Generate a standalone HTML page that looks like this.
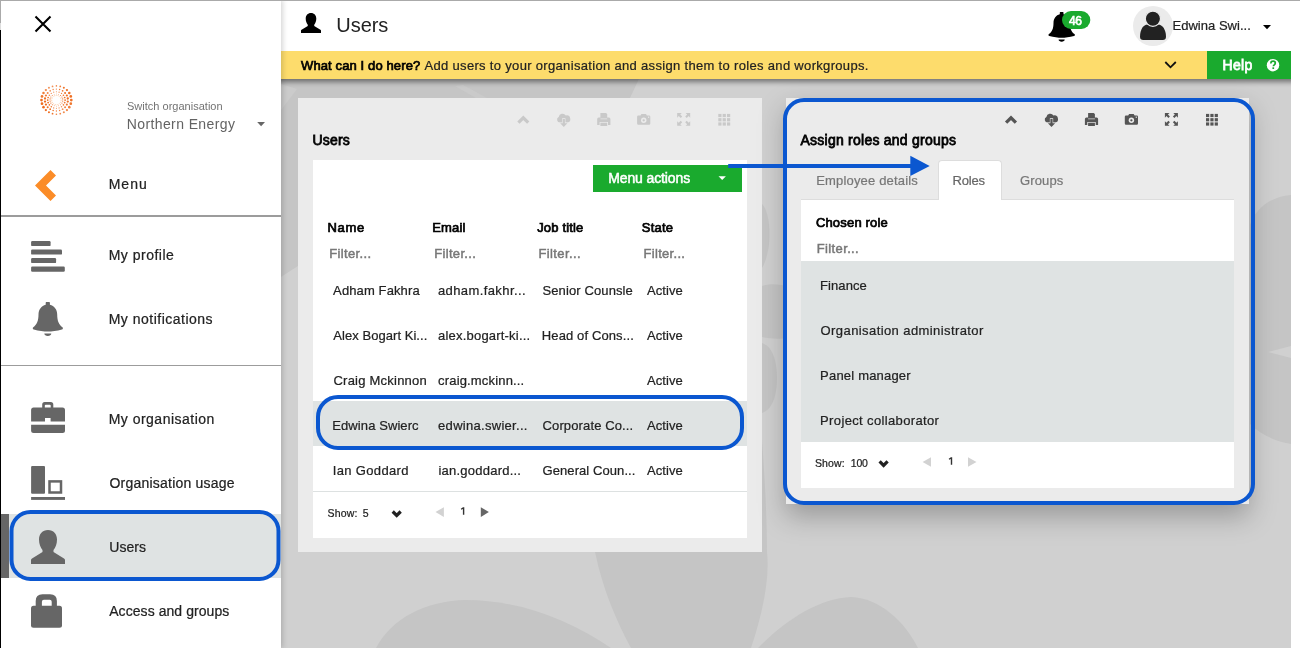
<!DOCTYPE html>
<html><head><meta charset="utf-8"><title>Users</title><style>
*{box-sizing:border-box;margin:0;padding:0}
html,body{width:1300px;height:648px;overflow:hidden;background:#fff;font-family:"Liberation Sans",sans-serif}
#page{position:absolute;left:0;top:0;width:1300px;height:648px;overflow:hidden;background:#fff}
.a{position:absolute}
.t{position:absolute;white-space:nowrap}
svg{position:absolute;left:0;top:0;overflow:visible}
</style></head><body><div id="page">
<div class="a" style="left:281px;top:51px;width:1010px;height:597px;background:#d0d0d0;overflow:hidden"><svg width="1010" height="597" viewBox="281 51 1010 597">
<g fill="#c5c5c5">
<path d="M281 51H652L630 98H298V266Q290 271 281 277Z"/>
<path d="M595 552C603 590 616 620 631 648H751C762 615 770 580 767 552C767 520 765 480 762 440V552Z"/>
<path d="M376 648C392 618 425 601 466 600C520 600 570 620 611 648Z"/>
<path d="M758 648C785 620 820 598 851 597C880 598 905 622 918 648Z"/>
<path d="M762 343C772 346 777 360 777 378C777 396 772 410 762 413Z"/>
<path d="M762 204C771 212 773 250 762 268Z"/>
<path d="M762 286C770 283 780 284 790 287V338C780 339 770 339 762 337Z"/>
<path d="M1291 195C1270 197 1256 208 1250 225L1250 424C1262 436 1278 442 1291 444Z"/>
</g>
<path d="M1291 346L1268 352L1291 358Z" fill="#d0d0d0"/>
<path d="M281 84L297 89L281 110Z" fill="#cbcbcb"/>
<path d="M455 86L463 85L487 98H476Z" fill="#cacaca"/>
</svg></div>
<div class="a" style="left:298px;top:98px;width:464px;height:454px;background:#ebebeb"></div>
<div class="a" style="left:313px;top:160px;width:434px;height:377.500px;background:#fff"></div>
<div class="a" style="left:313px;top:401px;width:434px;height:45px;background:#dfe3e3"></div>
<div class="a" style="left:313px;top:491px;width:434px;height:1px;background:#dde1e1"></div>
<div class="a" style="left:593px;top:165px;width:149px;height:27px;background:#1aaa2e"></div>
<div class="a" style="left:786px;top:98px;width:463px;height:406px;background:#ebebeb;box-shadow:0 12px 26px rgba(0,0,0,.27)"></div>
<div class="a" style="left:801px;top:199px;width:433px;height:289px;background:#fff;border-top:1px solid #ddd"></div>
<div class="a" style="left:937.500px;top:160px;width:64px;height:40px;background:#fff;border:1px solid #ddd;border-bottom:none;border-radius:4px 4px 0 0"></div>
<div class="a" style="left:801px;top:261px;width:433px;height:180.500px;background:#dfe3e3"></div>
<div class="a" style="left:281px;top:51px;width:1010px;height:597px;overflow:hidden"><div class="a" style="left:-10px;top:0;width:1030px;height:28px;box-shadow:0 3px 5px rgba(0,0,0,.45)"></div></div>
<div class="a" style="left:281px;top:51px;width:926px;height:28px;background:#fddc6c"></div>
<div class="a" style="left:1207px;top:51px;width:84px;height:28px;background:#1aaa2e"></div>
<div class="a" style="left:281px;top:0;width:1019px;height:51px;background:#fff"></div>
<div class="a" style="left:0;top:0;width:281px;height:648px;background:#fff;box-shadow:2px 0 5px rgba(0,0,0,.16)"></div>
<div class="a" style="left:0;top:79px;width:281px;height:569px;background:#fff"></div>
<div class="a" style="left:9px;top:514px;width:272px;height:64px;background:#dfe3e3"></div>
<div class="a" style="left:1px;top:514px;width:8px;height:64px;background:#666"></div>
<div class="a" style="left:1px;top:215px;width:280px;height:2px;background:#9c9c9c"></div>
<div class="a" style="left:1px;top:365px;width:280px;height:1px;background:#9c9c9c"></div>
<div class="a" style="left:0;top:0;width:1300px;height:1px;background:#aaa"></div>
<div class="a" style="left:0;top:0;width:1px;height:23px;background:#aaa"></div><div class="a" style="left:0;top:23px;width:1px;height:7px;background:#ddd"></div>
<div class="a" style="left:0;top:30px;width:1px;height:618px;background:#000"></div>
<div class="a" style="left:1133px;top:6px;width:40px;height:40px;border-radius:20px;background:#ebebeb"></div>
<svg width="1300" height="648" viewBox="0 0 1300 648"><path d="M35.500 16.500L50.500 31.500M50.500 16.500L35.500 31.500" stroke="#000" stroke-width="2.100" fill="none"/><g fill="#ee6a1c"><circle cx="71.30" cy="100.05" r="1.37" opacity="0.95"/><circle cx="70.79" cy="103.71" r="1.34" opacity="0.92"/><circle cx="69.30" cy="107.13" r="1.27" opacity="0.87"/><circle cx="66.94" cy="110.06" r="1.15" opacity="0.81"/><circle cx="63.85" cy="112.31" r="1.02" opacity="0.76"/><circle cx="60.26" cy="113.72" r="0.88" opacity="0.80"/><circle cx="56.40" cy="114.20" r="0.78" opacity="0.87"/><circle cx="52.54" cy="113.72" r="0.88" opacity="0.94"/><circle cx="48.95" cy="112.31" r="1.02" opacity="0.98"/><circle cx="45.86" cy="110.06" r="1.15" opacity="1.00"/><circle cx="43.50" cy="107.13" r="1.27" opacity="1.00"/><circle cx="42.01" cy="103.71" r="1.34" opacity="1.00"/><circle cx="41.50" cy="100.05" r="1.37" opacity="0.98"/><circle cx="42.01" cy="96.39" r="1.34" opacity="0.93"/><circle cx="43.50" cy="92.97" r="1.27" opacity="0.87"/><circle cx="45.86" cy="90.04" r="1.15" opacity="0.79"/><circle cx="48.95" cy="87.79" r="1.02" opacity="0.72"/><circle cx="52.54" cy="86.38" r="0.88" opacity="0.75"/><circle cx="56.40" cy="85.89" r="0.78" opacity="0.82"/><circle cx="60.26" cy="86.38" r="0.88" opacity="0.87"/><circle cx="63.85" cy="87.79" r="1.02" opacity="0.92"/><circle cx="66.94" cy="90.04" r="1.15" opacity="0.95"/><circle cx="69.30" cy="92.97" r="1.27" opacity="0.97"/><circle cx="70.79" cy="96.39" r="1.34" opacity="0.97"/><circle cx="67.78" cy="101.60" r="1.15" opacity="0.93"/><circle cx="66.86" cy="104.59" r="1.10" opacity="0.89"/><circle cx="65.09" cy="107.20" r="1.00" opacity="0.83"/><circle cx="62.62" cy="109.24" r="0.88" opacity="0.76"/><circle cx="59.64" cy="110.53" r="0.76" opacity="0.80"/><circle cx="56.40" cy="110.97" r="0.66" opacity="0.87"/><circle cx="53.16" cy="110.53" r="0.76" opacity="0.94"/><circle cx="50.18" cy="109.24" r="0.88" opacity="0.99"/><circle cx="47.71" cy="107.20" r="1.00" opacity="1.00"/><circle cx="45.94" cy="104.59" r="1.10" opacity="1.00"/><circle cx="45.02" cy="101.60" r="1.15" opacity="1.00"/><circle cx="45.02" cy="98.50" r="1.15" opacity="0.95"/><circle cx="45.94" cy="95.51" r="1.10" opacity="0.89"/><circle cx="47.71" cy="92.90" r="1.00" opacity="0.81"/><circle cx="50.18" cy="90.86" r="0.88" opacity="0.73"/><circle cx="53.16" cy="89.57" r="0.76" opacity="0.75"/><circle cx="56.40" cy="89.12" r="0.66" opacity="0.82"/><circle cx="59.64" cy="89.57" r="0.76" opacity="0.88"/><circle cx="62.62" cy="90.86" r="0.88" opacity="0.93"/><circle cx="65.09" cy="92.90" r="1.00" opacity="0.96"/><circle cx="66.86" cy="95.51" r="1.10" opacity="0.97"/><circle cx="67.78" cy="98.50" r="1.15" opacity="0.96"/><circle cx="65.10" cy="100.05" r="0.89" opacity="0.95"/><circle cx="64.67" cy="102.60" r="0.87" opacity="0.91"/><circle cx="63.44" cy="104.91" r="0.80" opacity="0.85"/><circle cx="61.51" cy="106.74" r="0.70" opacity="0.78"/><circle cx="59.09" cy="107.91" r="0.59" opacity="0.79"/><circle cx="56.40" cy="108.31" r="0.51" opacity="0.87"/><circle cx="53.71" cy="107.91" r="0.59" opacity="0.95"/><circle cx="51.29" cy="106.74" r="0.70" opacity="1.00"/><circle cx="49.36" cy="104.91" r="0.80" opacity="1.00"/><circle cx="48.13" cy="102.60" r="0.87" opacity="1.00"/><circle cx="47.70" cy="100.05" r="0.89" opacity="0.98"/><circle cx="48.13" cy="97.50" r="0.87" opacity="0.92"/><circle cx="49.36" cy="95.19" r="0.80" opacity="0.84"/><circle cx="51.29" cy="93.36" r="0.70" opacity="0.75"/><circle cx="53.71" cy="92.19" r="0.59" opacity="0.74"/><circle cx="56.40" cy="91.78" r="0.51" opacity="0.82"/><circle cx="59.09" cy="92.19" r="0.59" opacity="0.88"/><circle cx="61.51" cy="93.36" r="0.70" opacity="0.93"/><circle cx="63.44" cy="95.19" r="0.80" opacity="0.96"/><circle cx="64.67" cy="97.50" r="0.87" opacity="0.97"/><circle cx="62.70" cy="101.11" r="0.62" opacity="0.93"/><circle cx="61.94" cy="103.09" r="0.58" opacity="0.87"/><circle cx="60.51" cy="104.71" r="0.51" opacity="0.79"/><circle cx="58.59" cy="105.76" r="0.43" opacity="0.78"/><circle cx="56.40" cy="106.13" r="0.36" opacity="0.87"/><circle cx="54.21" cy="105.76" r="0.43" opacity="0.95"/><circle cx="52.29" cy="104.71" r="0.51" opacity="1.00"/><circle cx="50.86" cy="103.09" r="0.58" opacity="1.00"/><circle cx="50.10" cy="101.11" r="0.62" opacity="1.00"/><circle cx="50.10" cy="98.99" r="0.62" opacity="0.95"/><circle cx="50.86" cy="97.01" r="0.58" opacity="0.87"/><circle cx="52.29" cy="95.39" r="0.51" opacity="0.77"/><circle cx="54.21" cy="94.34" r="0.43" opacity="0.73"/><circle cx="56.40" cy="93.97" r="0.36" opacity="0.82"/><circle cx="58.59" cy="94.34" r="0.43" opacity="0.89"/><circle cx="60.51" cy="95.39" r="0.51" opacity="0.94"/><circle cx="61.94" cy="97.01" r="0.58" opacity="0.97"/><circle cx="62.70" cy="98.99" r="0.62" opacity="0.96"/><circle cx="56.4" cy="100.05" r="4.700" fill="none" stroke="#f47b20" stroke-width=".6" opacity=".55" stroke-dasharray="1.2 .7"/></g><path d="M257.200 122.100H265L261.100 126.300Z" fill="#666"/><path d="M35 185.500L50.500 170L56 175.500L46 185.500L56 195.500L50.500 201Z" fill="#fb8c28"/><rect x="31.100" y="241" width="19.5" height="5.100" rx="1.200" fill="#666"/><rect x="31.100" y="249.5" width="30.9" height="5.100" rx="1.200" fill="#666"/><rect x="31.100" y="258" width="25.0" height="5.100" rx="1.200" fill="#666"/><rect x="31.100" y="266.6" width="33.7" height="5.100" rx="1.200" fill="#666"/><path transform="translate(32.800 302)" d="M12.900 .7c0-.5 .2-.7 .7-.7h2.800c.5 0 .7 .2 .7 .7v2c4.300 1 7.3 4.8 7.3 9.8c0 6.5 1.7 10 5.2 12.7c.9 .7 .6 2-.5 2.3C24 29 19 29.5 15 29.5S6 29 1 27.5c-1.1-.3-1.4-1.6-.5-2.3C4 22.5 5.700 19 5.700 12.5c0-5 3-8.800 7.200-9.800z M11.500 31.500h7c0 1.500-1.500 2.500-3.500 2.500s-3.500-1-3.500-2.500z" fill="#666"/><g fill="#666"><path d="M42.200 408V404.500q0-2.500 2.500-2.500h6.100q2.500 0 2.500 2.500V408h-2.600v-2.400q0-.9-.9-.9h-4.100q-.9 0-.9 .9V408z"/><path d="M31.100 410.100q0-2.500 2.500-2.500h28.900q2.500 0 2.500 2.500v11.400H50.600v-3.400H45v3.400H31.100z"/><path d="M31.100 424.800H65v5.700q0 2.500-2.500 2.500H33.600q-2.500 0-2.500-2.500z"/></g><g fill="#666"><rect x="31.100" y="466" width="13.900" height="27.700" rx="1"/><rect x="31.100" y="497" width="33.900" height="2.900"/></g><rect x="49.500" y="481.400" width="11.500" height="11.100" fill="none" stroke="#666" stroke-width="2.500"/><path transform="translate(31 530)" d="M17 0C22.5 0 26 4 26 9.5C26 14 24.5 17.5 22.5 20L22.5 22L33 28.5Q34 29 34 30L34 34L0 34L0 30Q0 29 1 28.5L11.5 22L11.5 20C9.5 17.5 8 14 8 9.5C8 4 11.5 0 17 0Z" fill="#666"/><g fill="#666"><rect x="31" y="605.800" width="31" height="22" rx="2.500"/><path d="M35.700 607V601q0-6.800 6.800-6.800h7.600q6.800 0 6.800 6.800v6h-5.200v-5.200q0-2-2-2h-5.800q-2 0-2 2V607z"/></g><path transform="translate(301 13) scale(0.5882)" d="M17 0C22.5 0 26 4 26 9.5C26 14 24.5 17.5 22.5 20L22.5 22L33 28.5Q34 29 34 30L34 34L0 34L0 30Q0 29 1 28.5L11.5 22L11.5 20C9.5 17.5 8 14 8 9.5C8 4 11.5 0 17 0Z" fill="#000"/><path transform="translate(1048.500 12) scale(0.8767 0.8765)" d="M12.900 .7c0-.5 .2-.7 .7-.7h2.800c.5 0 .7 .2 .7 .7v2c4.300 1 7.3 4.8 7.3 9.8c0 6.5 1.7 10 5.2 12.7c.9 .7 .6 2-.5 2.3C24 29 19 29.5 15 29.5S6 29 1 27.5c-1.1-.3-1.4-1.6-.5-2.3C4 22.5 5.700 19 5.700 12.5c0-5 3-8.800 7.200-9.800z M11.500 31.500h7c0 1.500-1.500 2.500-3.500 2.500s-3.500-1-3.500-2.500z" fill="#000"/><rect x="1062" y="11" width="28.300" height="18" rx="9" fill="#1aaa2e"/><path d="M1140 36.800C1140 29.500 1143.500 24.600 1147.500 24.600H1158.200C1162.200 24.600 1166 29.500 1166 36.800C1166 39 1164.800 40 1162.800 40H1143.200C1141.200 40 1140 39 1140 36.800Z" fill="#222"/><circle cx="1152.900" cy="18.700" r="7.600" fill="#222" stroke="#ebebeb" stroke-width="1.200"/><path d="M1263 25H1271L1267 29.200Z" fill="#000"/><polyline points="1165.300,62 1170.500,67.300 1175.800,62" fill="none" stroke="#111" stroke-width="1.800"/><circle cx="1273" cy="65.200" r="6.200" fill="#fff"/><path d="M1270.800 63.400q0-2.300 2.300-2.300q2.200 0 2.200 2q0 1.200-1.100 1.800q-.8 .5-.8 1.300" fill="none" stroke="#1aaa2e" stroke-width="1.700"/><rect x="1272.400" y="67.300" width="1.700" height="1.700" fill="#1aaa2e"/><polyline points="518.4,122.7 523.3,117.8 528.1999999999999,122.7" fill="none" stroke="#c9c9c9" stroke-width="3.2"/><path d="M560.0 122.6A2.95 2.95 0 0 1 558.6999999999999 117A3.9 3.9 0 0 1 565.8 115.5A3.2 3.2 0 0 1 567.5 122.6Z" fill="#c9c9c9"/><path d="M562.6999999999999 118.9h2.2v4.4h2.5l-3.6 3.6l-3.6-3.6h2.500z" fill="#c9c9c9" stroke="#ebebeb" stroke-width="1.1" paint-order="stroke"/><g fill="#c9c9c9"><path d="M600.4 112.9h5.6l1.2 1.2v4.3h-6.800z"/><path d="M597.1999999999999 118.9q0-1.500 1.500-1.500h10.200q1.500 0 1.500 1.500v6h-2.400v-3h-8.400v3h-2.400z"/></g><rect x="600.4" y="118.4" width="6.8" height=".9" fill="#ebebeb" opacity=".75"/><rect x="600.4" y="122.7" width="6.8" height="3.3" fill="#c9c9c9"/><g fill="#c9c9c9"><path d="M638.3 115.600h2.200l.9-1.700h4.600l.9 1.700h2.200q1.200 0 1.200 1.200v6.800q0 1.200-1.200 1.200h-10.800q-1.200 0-1.200-1.200v-6.800q0-1.200 1.200-1.200z"/></g><circle cx="643.6999999999999" cy="120.3" r="2.7" fill="#ebebeb"/><circle cx="643.6999999999999" cy="120.3" r="1.15" fill="#c9c9c9"/><rect x="647.9999999999999" y="116.6" width="1.2" height="1.2" fill="#ebebeb"/><g fill="#c9c9c9"><path d="M677.1999999999999 113.05L681.8 113.05L680.2499999999999 114.6L682.1999999999999 116.55L680.6999999999999 118.05L678.7499999999999 116.1L677.1999999999999 117.64999999999999Z"/><path d="M690.1999999999999 113.05L685.5999999999999 113.05L687.15 114.6L685.1999999999999 116.55L686.6999999999999 118.05L688.65 116.1L690.1999999999999 117.64999999999999Z"/><path d="M677.1999999999999 125.85000000000001L681.8 125.85000000000001L680.2499999999999 124.30000000000001L682.1999999999999 122.35000000000001L680.6999999999999 120.85000000000001L678.7499999999999 122.80000000000001L677.1999999999999 121.25000000000001Z"/><path d="M690.1999999999999 125.85000000000001L685.5999999999999 125.85000000000001L687.15 124.30000000000001L685.1999999999999 122.35000000000001L686.6999999999999 120.85000000000001L688.65 122.80000000000001L690.1999999999999 121.25000000000001Z"/></g><g fill="#c9c9c9"><rect x="718.30" y="113.90" width="3.2" height="3.2"/><rect x="718.30" y="118.15" width="3.2" height="3.2"/><rect x="718.30" y="122.40" width="3.2" height="3.2"/><rect x="722.65" y="113.90" width="3.2" height="3.2"/><rect x="722.65" y="118.15" width="3.2" height="3.2"/><rect x="722.65" y="122.40" width="3.2" height="3.2"/><rect x="727.00" y="113.90" width="3.2" height="3.2"/><rect x="727.00" y="118.15" width="3.2" height="3.2"/><rect x="727.00" y="122.40" width="3.2" height="3.2"/></g><polyline points="1006.1,122.7 1011,117.8 1015.9,122.7" fill="none" stroke="#555" stroke-width="3.2"/><path d="M1047.7 122.6A2.95 2.95 0 0 1 1046.4 117A3.9 3.9 0 0 1 1053.5 115.5A3.2 3.2 0 0 1 1055.2 122.6Z" fill="#555"/><path d="M1050.4 118.9h2.2v4.4h2.5l-3.6 3.6l-3.6-3.6h2.500z" fill="#555" stroke="#ebebeb" stroke-width="1.1" paint-order="stroke"/><g fill="#555"><path d="M1088.1 112.9h5.6l1.2 1.2v4.3h-6.800z"/><path d="M1084.9 118.9q0-1.500 1.500-1.500h10.200q1.500 0 1.500 1.500v6h-2.400v-3h-8.400v3h-2.400z"/></g><rect x="1088.1" y="118.4" width="6.8" height=".9" fill="#ebebeb" opacity=".75"/><rect x="1088.1" y="122.7" width="6.8" height="3.3" fill="#555"/><g fill="#555"><path d="M1126.0 115.600h2.200l.9-1.700h4.600l.9 1.700h2.200q1.200 0 1.200 1.200v6.800q0 1.200-1.200 1.200h-10.800q-1.200 0-1.200-1.200v-6.800q0-1.200 1.200-1.200z"/></g><circle cx="1131.4" cy="120.3" r="2.7" fill="#ebebeb"/><circle cx="1131.4" cy="120.3" r="1.15" fill="#555"/><rect x="1135.7" y="116.6" width="1.2" height="1.2" fill="#ebebeb"/><g fill="#555"><path d="M1164.9 113.05L1169.5 113.05L1167.95 114.6L1169.9 116.55L1168.4 118.05L1166.45 116.1L1164.9 117.64999999999999Z"/><path d="M1177.9 113.05L1173.3000000000002 113.05L1174.8500000000001 114.6L1172.9 116.55L1174.4 118.05L1176.3500000000001 116.1L1177.9 117.64999999999999Z"/><path d="M1164.9 125.85000000000001L1169.5 125.85000000000001L1167.95 124.30000000000001L1169.9 122.35000000000001L1168.4 120.85000000000001L1166.45 122.80000000000001L1164.9 121.25000000000001Z"/><path d="M1177.9 125.85000000000001L1173.3000000000002 125.85000000000001L1174.8500000000001 124.30000000000001L1172.9 122.35000000000001L1174.4 120.85000000000001L1176.3500000000001 122.80000000000001L1177.9 121.25000000000001Z"/></g><g fill="#555"><rect x="1206.00" y="113.90" width="3.2" height="3.2"/><rect x="1206.00" y="118.15" width="3.2" height="3.2"/><rect x="1206.00" y="122.40" width="3.2" height="3.2"/><rect x="1210.35" y="113.90" width="3.2" height="3.2"/><rect x="1210.35" y="118.15" width="3.2" height="3.2"/><rect x="1210.35" y="122.40" width="3.2" height="3.2"/><rect x="1214.70" y="113.90" width="3.2" height="3.2"/><rect x="1214.70" y="118.15" width="3.2" height="3.2"/><rect x="1214.70" y="122.40" width="3.2" height="3.2"/></g><path d="M718.500 176.200H725.900L722.200 180.100Z" fill="#fff"/><polyline points="392.700,511.500 396.700,515.500 400.700,511.500" fill="none" stroke="#222" stroke-width="3.200"/><path d="M435.500 512L443.900 507.200V516.900Z" fill="#d2d2d2"/><path d="M463 507.300h1.300v7.400h-1.400v-5.800l-1.600 .9l-.5-1z" fill="#333"/><path d="M488.900 512L480.800 507.200V516.900Z" fill="#666"/><polyline points="879.600,461.400 883.600,465.400 887.600,461.400" fill="none" stroke="#222" stroke-width="3.200"/><path d="M922.600 462L931 457.300V466.800Z" fill="#d2d2d2"/><path d="M976.500 462L968 457.300V466.800Z" fill="#d2d2d2"/><path d="M950.900 457.300h1.300v7.500h-1.400v-5.900l-1.600 .9l-.5-1z" fill="#333"/><g fill="none" stroke="#0b57d0" stroke-width="4"><rect x="785" y="100" width="468" height="403" rx="19"/><rect x="318" y="397" width="424" height="51" rx="20"/><rect x="11.500" y="512" width="267" height="67" rx="19"/><path d="M728.200 166H912"/></g><path d="M910.300 155.800L929.700 166L910.300 176Z" fill="#0b57d0"/></svg>
<div class="a" style="left:0;top:0;width:1300px;height:648px;will-change:transform"><div class="t" style="left:336.30px;top:15.07px;font-size:20px;line-height:20px;color:#222;letter-spacing:-0.057px;">Users</div>
<div class="t" style="left:1069.10px;top:14.54px;font-size:12px;line-height:12px;color:#fff;-webkit-text-stroke:0.66px #fff;letter-spacing:-0.474px;">46</div>
<div class="t" style="left:1172.50px;top:18.60px;font-size:13px;line-height:13px;color:#222;-webkit-text-stroke:0.22px #222;letter-spacing:0.023px;">Edwina Swi...</div>
<div class="t" style="left:301.00px;top:59.00px;font-size:13px;line-height:13px;color:#000;-webkit-text-stroke:0.71px #000;letter-spacing:0.120px;">What can I do here?</div>
<div class="t" style="left:424.50px;top:59.00px;font-size:13px;line-height:13px;color:#222;-webkit-text-stroke:0.22px #222;letter-spacing:0.323px;">Add users to your organisation and assign them to roles and workgroups.</div>
<div class="t" style="left:1222.50px;top:58.35px;font-size:14px;line-height:14px;color:#fff;-webkit-text-stroke:0.77px #fff;letter-spacing:0.331px;">Help</div>
<div class="t" style="left:127.00px;top:100.69px;font-size:11px;line-height:11px;color:#737373;letter-spacing:0.013px;">Switch organisation</div>
<div class="t" style="left:126.70px;top:116.65px;font-size:14px;line-height:14px;color:#636363;letter-spacing:0.399px;">Northern Energy</div>
<div class="t" style="left:108.70px;top:177.15px;font-size:14px;line-height:14px;color:#222;-webkit-text-stroke:0.22px #222;letter-spacing:1.022px;">Menu</div>
<div class="t" style="left:108.70px;top:248.15px;font-size:14px;line-height:14px;color:#222;-webkit-text-stroke:0.22px #222;letter-spacing:0.489px;">My profile</div>
<div class="t" style="left:108.70px;top:312.15px;font-size:14px;line-height:14px;color:#222;-webkit-text-stroke:0.22px #222;letter-spacing:0.495px;">My notifications</div>
<div class="t" style="left:108.70px;top:412.15px;font-size:14px;line-height:14px;color:#222;-webkit-text-stroke:0.22px #222;letter-spacing:0.483px;">My organisation</div>
<div class="t" style="left:109.50px;top:476.15px;font-size:14px;line-height:14px;color:#222;-webkit-text-stroke:0.22px #222;letter-spacing:0.216px;">Organisation usage</div>
<div class="t" style="left:109.20px;top:540.15px;font-size:14px;line-height:14px;color:#222;-webkit-text-stroke:0.22px #222;letter-spacing:0.085px;">Users</div>
<div class="t" style="left:109.20px;top:604.15px;font-size:14px;line-height:14px;color:#222;-webkit-text-stroke:0.22px #222;letter-spacing:0.064px;">Access and groups</div>
<div class="t" style="left:312.50px;top:133.15px;font-size:14px;line-height:14px;color:#000;-webkit-text-stroke:0.77px #000;letter-spacing:0.185px;">Users</div>
<div class="t" style="left:800.50px;top:133.15px;font-size:14px;line-height:14px;color:#000;-webkit-text-stroke:0.77px #000;letter-spacing:0.241px;">Assign roles and groups</div>
<div class="t" style="left:608.20px;top:171.35px;font-size:14px;line-height:14px;color:#fff;-webkit-text-stroke:0.50px #fff;letter-spacing:-0.115px;">Menu actions</div>
<div class="t" style="left:327.50px;top:221.20px;font-size:13px;line-height:13px;color:#000;-webkit-text-stroke:0.71px #000;letter-spacing:0.718px;">Name</div>
<div class="t" style="left:432.30px;top:221.20px;font-size:13px;line-height:13px;color:#000;-webkit-text-stroke:0.71px #000;letter-spacing:0.120px;">Email</div>
<div class="t" style="left:537.20px;top:221.20px;font-size:13px;line-height:13px;color:#000;-webkit-text-stroke:0.71px #000;letter-spacing:0.166px;">Job title</div>
<div class="t" style="left:641.80px;top:221.20px;font-size:13px;line-height:13px;color:#000;-webkit-text-stroke:0.71px #000;letter-spacing:0.194px;">State</div>
<div class="t" style="left:329.30px;top:247.00px;font-size:13px;line-height:13px;color:#777;-webkit-text-stroke:0.47px #777;letter-spacing:0.351px;">Filter...</div>
<div class="t" style="left:434.20px;top:247.00px;font-size:13px;line-height:13px;color:#777;-webkit-text-stroke:0.47px #777;letter-spacing:0.326px;">Filter...</div>
<div class="t" style="left:538.40px;top:247.00px;font-size:13px;line-height:13px;color:#777;-webkit-text-stroke:0.47px #777;letter-spacing:0.401px;">Filter...</div>
<div class="t" style="left:643.60px;top:247.00px;font-size:13px;line-height:13px;color:#777;-webkit-text-stroke:0.47px #777;letter-spacing:0.288px;">Filter...</div>
<div class="t" style="left:333.10px;top:284.00px;font-size:13px;line-height:13px;color:#222;-webkit-text-stroke:0.22px #222;letter-spacing:0.115px;">Adham Fakhra</div>
<div class="t" style="left:437.90px;top:284.00px;font-size:13px;line-height:13px;color:#222;-webkit-text-stroke:0.22px #222;letter-spacing:0.410px;">adham.fakhr...</div>
<div class="t" style="left:542.50px;top:284.00px;font-size:13px;line-height:13px;color:#222;-webkit-text-stroke:0.22px #222;letter-spacing:0.111px;">Senior Counsle</div>
<div class="t" style="left:647.00px;top:284.00px;font-size:13px;line-height:13px;color:#222;-webkit-text-stroke:0.22px #222;letter-spacing:0.066px;">Active</div>
<div class="t" style="left:333.30px;top:329.00px;font-size:13px;line-height:13px;color:#222;-webkit-text-stroke:0.22px #222;letter-spacing:0.050px;">Alex Bogart Ki...</div>
<div class="t" style="left:438.10px;top:329.00px;font-size:13px;line-height:13px;color:#222;-webkit-text-stroke:0.22px #222;letter-spacing:0.196px;">alex.bogart-ki...</div>
<div class="t" style="left:541.80px;top:329.00px;font-size:13px;line-height:13px;color:#222;-webkit-text-stroke:0.22px #222;letter-spacing:0.120px;">Head of Cons...</div>
<div class="t" style="left:647.00px;top:329.00px;font-size:13px;line-height:13px;color:#222;-webkit-text-stroke:0.22px #222;letter-spacing:0.066px;">Active</div>
<div class="t" style="left:333.50px;top:374.00px;font-size:13px;line-height:13px;color:#222;-webkit-text-stroke:0.22px #222;letter-spacing:0.224px;">Craig Mckinnon</div>
<div class="t" style="left:438.10px;top:374.00px;font-size:13px;line-height:13px;color:#222;-webkit-text-stroke:0.22px #222;letter-spacing:0.165px;">craig.mckinn...</div>
<div class="t" style="left:647.00px;top:374.00px;font-size:13px;line-height:13px;color:#222;-webkit-text-stroke:0.22px #222;letter-spacing:0.066px;">Active</div>
<div class="t" style="left:332.30px;top:419.00px;font-size:13px;line-height:13px;color:#222;-webkit-text-stroke:0.22px #222;letter-spacing:0.087px;">Edwina Swierc</div>
<div class="t" style="left:438.10px;top:419.00px;font-size:13px;line-height:13px;color:#222;-webkit-text-stroke:0.22px #222;letter-spacing:0.289px;">edwina.swier...</div>
<div class="t" style="left:542.50px;top:419.00px;font-size:13px;line-height:13px;color:#222;-webkit-text-stroke:0.22px #222;letter-spacing:0.131px;">Corporate Co...</div>
<div class="t" style="left:647.00px;top:419.00px;font-size:13px;line-height:13px;color:#222;-webkit-text-stroke:0.22px #222;letter-spacing:0.066px;">Active</div>
<div class="t" style="left:332.80px;top:464.00px;font-size:13px;line-height:13px;color:#222;-webkit-text-stroke:0.22px #222;letter-spacing:0.336px;">Ian Goddard</div>
<div class="t" style="left:438.50px;top:464.00px;font-size:13px;line-height:13px;color:#222;-webkit-text-stroke:0.22px #222;letter-spacing:0.224px;">ian.goddard...</div>
<div class="t" style="left:542.50px;top:464.00px;font-size:13px;line-height:13px;color:#222;-webkit-text-stroke:0.22px #222;letter-spacing:0.081px;">General Coun...</div>
<div class="t" style="left:647.00px;top:464.00px;font-size:13px;line-height:13px;color:#222;-webkit-text-stroke:0.22px #222;letter-spacing:0.066px;">Active</div>
<div class="t" style="left:327.60px;top:508.11px;font-size:10.5px;line-height:10.5px;color:#222;-webkit-text-stroke:0.22px #222;letter-spacing:0.159px;">Show:</div>
<div class="t" style="left:362.70px;top:508.11px;font-size:10.5px;line-height:10.5px;color:#222;-webkit-text-stroke:0.22px #222;">5</div>
<div class="t" style="left:816.20px;top:173.80px;font-size:13px;line-height:13px;color:#777;-webkit-text-stroke:0.22px #777;letter-spacing:0.173px;">Employee details</div>
<div class="t" style="left:952.50px;top:173.80px;font-size:13px;line-height:13px;color:#666;-webkit-text-stroke:0.22px #666;letter-spacing:-0.209px;">Roles</div>
<div class="t" style="left:1020.00px;top:173.80px;font-size:13px;line-height:13px;color:#777;-webkit-text-stroke:0.22px #777;letter-spacing:0.134px;">Groups</div>
<div class="t" style="left:815.90px;top:215.50px;font-size:13px;line-height:13px;color:#000;-webkit-text-stroke:0.71px #000;letter-spacing:0.183px;">Chosen role</div>
<div class="t" style="left:816.80px;top:241.80px;font-size:13px;line-height:13px;color:#777;-webkit-text-stroke:0.47px #777;letter-spacing:0.363px;">Filter...</div>
<div class="t" style="left:820.10px;top:279.00px;font-size:13px;line-height:13px;color:#222;-webkit-text-stroke:0.22px #222;letter-spacing:0.063px;">Finance</div>
<div class="t" style="left:820.60px;top:324.00px;font-size:13px;line-height:13px;color:#222;-webkit-text-stroke:0.22px #222;letter-spacing:0.411px;">Organisation administrator</div>
<div class="t" style="left:820.10px;top:369.00px;font-size:13px;line-height:13px;color:#222;-webkit-text-stroke:0.22px #222;letter-spacing:0.197px;">Panel manager</div>
<div class="t" style="left:820.10px;top:414.00px;font-size:13px;line-height:13px;color:#222;-webkit-text-stroke:0.22px #222;letter-spacing:0.360px;">Project collaborator</div>
<div class="t" style="left:814.90px;top:458.11px;font-size:10.5px;line-height:10.5px;color:#222;-webkit-text-stroke:0.22px #222;letter-spacing:0.159px;">Show:</div>
<div class="t" style="left:850.80px;top:458.11px;font-size:10.5px;line-height:10.5px;color:#222;-webkit-text-stroke:0.22px #222;letter-spacing:-0.240px;">100</div></div>
</div></body></html>
